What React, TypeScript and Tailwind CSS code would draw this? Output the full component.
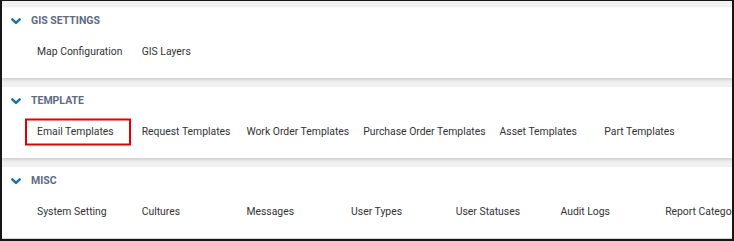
import React from 'react';

type Section = { title: string; items: string[] };

const sections: Section[] = [
    { title: 'GIS SETTINGS', items: ['Map Configuration', 'GIS Layers'] },
    {
        title: 'TEMPLATE',
        items: [
            'Email Templates',
            'Request Templates',
            'Work Order Templates',
            'Purchase Order Templates',
            'Asset Templates',
            'Part Templates',
        ],
    },
    {
        title: 'MISC',
        items: [
            'System Setting',
            'Cultures',
            'Messages',
            'User Types',
            'User Statuses',
            'Audit Logs',
            'Report Categories',
        ],
    },
];

function Chevron() {
    return (
        <svg width="10" height="7" viewBox="0 0 10 7" className="shrink-0">
            <polyline points="1.3,1.3 5,4.9 8.7,1.3" fill="none" stroke="#1d6fa5" strokeWidth="2.4" strokeLinecap="round" strokeLinejoin="round" />
        </svg>
    );
}

function SettingsCard({ section }: { section: Section }) {
    return (
        <div className="mb-[9px] h-[71px] bg-white shadow-[0_2px_3px_rgba(0,0,0,0.14)]">
            <div className="flex h-[28px] items-center gap-[10px] pl-[9px]">
                <Chevron />
                <span className="text-[10.5px] font-bold text-[#5f6a84]">{section.title}</span>
            </div>
            <div className="flex h-[34px] items-center whitespace-nowrap pl-[35px]">
                {section.items.map((item) => (
                    <div key={item} className="min-w-[104.7px] shrink-0 pr-[14px] text-[10.4px] text-[#333]">
                        <span className="relative">
                            {item}
                            {item === 'Email Templates' ? (
                                <span className="absolute left-[-12px] top-1/2 h-[27px] w-[106px] -translate-y-1/2 border-2 border-[#e00000]" />
                            ) : null}
                        </span>
                    </div>
                ))}
            </div>
        </div>
    );
}

export default function App() {
    return (
        <div className="h-[241px] w-[734px] overflow-hidden border-x-2 border-b-2 border-t border-[#161616] bg-[#f1f1f1] pt-[6px] font-['Roboto',sans-serif]">
            {sections.map((s) => (
                <SettingsCard key={s.title} section={s} />
            ))}
        </div>
    );
}
